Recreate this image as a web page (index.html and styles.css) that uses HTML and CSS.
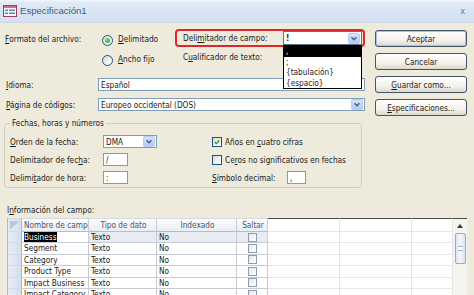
FILE: index.html
```html
<!DOCTYPE html>
<html lang="es">
<head>
    <meta charset="UTF-8">
    <title>Especificación1</title>
    <link rel="stylesheet" href="styles.css">
</head>
<body>
    <div class="window">
        <div class="titlebar">
            <svg class="app-icon" viewBox="0 0 14 12">
                <rect x="0.5" y="0.5" width="13" height="11" fill="#fdf7f9" stroke="#9a3f62"/>
                <rect x="1" y="1" width="12" height="2" fill="#cf6d8f"/>
                <rect x="2" y="4.5" width="3" height="1.5" fill="#5a86c4"/>
                <rect x="6" y="4.5" width="6" height="1.5" fill="#5a86c4"/>
                <rect x="2" y="7.5" width="3" height="1.5" fill="#5a86c4"/>
                <rect x="6" y="7.5" width="6" height="1.5" fill="#5a86c4"/>
            </svg>
            <span class="title">Especificación1</span>
            <span class="close">x</span>
        </div>

        <div class="dialog">
            <div class="top">
                <div class="main">
                    <div class="format-row">
                        <span class="format-label"><u>F</u>ormato del archivo:</span>
                        <div class="radios">
                            <div class="radio"><span class="radio-dot checked"></span><span><u>D</u>elimitado</span></div>
                            <div class="radio"><span class="radio-dot"></span><span><u>A</u>ncho fijo</span></div>
                        </div>
                        <div class="delims">
                            <div class="delim-field">
                                <span class="delim-label">Deli<u>m</u>itador de campo:</span>
                                <div class="combo combo-open">
                                    <span class="combo-text"><b>!</b></span>
                                    <span class="combo-arrow">
                                        <svg viewBox="0 0 9 9"><path d="M2 3.2 L4.5 5.7 L7 3.2" fill="none" stroke="#4d6185" stroke-width="1.6"/></svg>
                                    </span>
                                    <ul class="dropdown">
                                        <li class="selected">,</li>
                                        <li>;</li>
                                        <li>{tabulación}</li>
                                        <li>{espacio}</li>
                                    </ul>
                                </div>
                            </div>
                            <div class="qualifier">C<u>u</u>alificador de texto:</div>
                        </div>
                    </div>

                    <div class="field-row">
                        <span class="field-label"><u>I</u>dioma:</span>
                        <div class="input wide">Español</div>
                    </div>
                    <div class="field-row">
                        <span class="field-label"><u>P</u>ágina de códigos:</span>
                        <div class="combo wide">
                            <span class="combo-text">Europeo occidental (DOS)</span>
                            <span class="combo-arrow">
                                <svg viewBox="0 0 9 9"><path d="M2 3.2 L4.5 5.7 L7 3.2" fill="none" stroke="#4d6185" stroke-width="1.6"/></svg>
                            </span>
                        </div>
                    </div>

                    <fieldset class="group">
                        <legend>Fechas, horas y números</legend>
                        <div class="group-grid">
                            <span><u>O</u>rden de la fecha:</span>
                            <div class="combo date-order">
                                <span class="combo-text">DMA</span>
                                <span class="combo-arrow">
                                    <svg viewBox="0 0 9 9"><path d="M2 3.2 L4.5 5.7 L7 3.2" fill="none" stroke="#4d6185" stroke-width="1.6"/></svg>
                                </span>
                            </div>
                            <div class="check">
                                <span class="check-box">
                                    <svg viewBox="0 0 10 10"><path d="M2.2 5 L4.2 7 L7.8 2.8" fill="none" stroke="#21a121" stroke-width="1.6"/></svg>
                                </span>
                                <span>Años en <u>c</u>uatro cifras</span>
                            </div>

                            <span>Delimitador de fec<u>h</u>a:</span>
                            <div class="input small">/</div>
                            <div class="check">
                                <span class="check-box"></span>
                                <span>Ce<u>r</u>os no significativos en fechas</span>
                            </div>

                            <span>Delimi<u>t</u>ador de hora:</span>
                            <div class="input small">:</div>
                            <div class="decimal">
                                <span class="decimal-label"><u>S</u>ímbolo decimal:</span>
                                <div class="input tiny">,</div>
                            </div>
                        </div>
                    </fieldset>
                </div>

                <div class="buttons">
                    <div class="btn default">Aceptar</div>
                    <div class="btn">Cancelar</div>
                    <div class="btn"><span><u>G</u>uardar como...</span></div>
                    <div class="btn"><span><u>E</u>specificaciones...</span></div>
                </div>
            </div>

            <div class="info-label">I<u>n</u>formación del campo:</div>

            <div class="grid">
                <div class="sheet">
                    <div class="row head">
                        <div class="cell sel corner">
                            <svg viewBox="0 0 15 13"><path d="M2 2 H13 L2 12 Z" fill="#b7c8e4"/></svg>
                        </div>
                        <div class="cell">Nombre de campo</div>
                        <div class="cell">Tipo de dato</div>
                        <div class="cell">Indexado</div>
                        <div class="cell">Saltar</div>
                        <div class="cell blank"></div>
                        <div class="cell blank"></div>
                        <div class="cell blank"></div>
                    </div>
                    <div class="row current">
                        <div class="cell sel"></div>
                        <div class="cell name"><span class="hl">Business</span></div>
                        <div class="cell">Texto</div>
                        <div class="cell">No</div>
                        <div class="cell skip"><span class="skip-box"></span></div>
                        <div class="cell blank"></div>
                        <div class="cell blank"></div>
                        <div class="cell blank"></div>
                    </div>
                    <div class="row">
                        <div class="cell sel"></div>
                        <div class="cell">Segment</div>
                        <div class="cell">Texto</div>
                        <div class="cell">No</div>
                        <div class="cell skip"><span class="skip-box"></span></div>
                        <div class="cell blank"></div>
                        <div class="cell blank"></div>
                        <div class="cell blank"></div>
                    </div>
                    <div class="row">
                        <div class="cell sel"></div>
                        <div class="cell">Category</div>
                        <div class="cell">Texto</div>
                        <div class="cell">No</div>
                        <div class="cell skip"><span class="skip-box"></span></div>
                        <div class="cell blank"></div>
                        <div class="cell blank"></div>
                        <div class="cell blank"></div>
                    </div>
                    <div class="row">
                        <div class="cell sel"></div>
                        <div class="cell">Product Type</div>
                        <div class="cell">Texto</div>
                        <div class="cell">No</div>
                        <div class="cell skip"><span class="skip-box"></span></div>
                        <div class="cell blank"></div>
                        <div class="cell blank"></div>
                        <div class="cell blank"></div>
                    </div>
                    <div class="row">
                        <div class="cell sel"></div>
                        <div class="cell">Impact Business</div>
                        <div class="cell">Texto</div>
                        <div class="cell">No</div>
                        <div class="cell skip"><span class="skip-box"></span></div>
                        <div class="cell blank"></div>
                        <div class="cell blank"></div>
                        <div class="cell blank"></div>
                    </div>
                    <div class="row">
                        <div class="cell sel"></div>
                        <div class="cell">Impact Category</div>
                        <div class="cell">Texto</div>
                        <div class="cell">No</div>
                        <div class="cell skip"><span class="skip-box"></span></div>
                        <div class="cell blank"></div>
                        <div class="cell blank"></div>
                        <div class="cell blank"></div>
                    </div>
                </div>
                <div class="scrollbar">
                    <span class="sb-up"></span>
                    <span class="sb-thumb"><span class="sb-grip"></span></span>
                </div>
            </div>
        </div>
    </div>
</body>
</html>
```

FILE: styles.css
```css
:root {
    --clr-face: #eeebdd;
    --clr-text: #1a1a1a;
    --clr-field-border: #7f9db9;
    --clr-xp-blue: #1c5180;
    --clr-grid-line: #c6ccd6;
    --clr-blank-line: #e6e6e6;
}

* {
    margin: 0;
    padding: 0;
    box-sizing: border-box;
}

body {
    font-family: "DejaVu Sans Condensed", "DejaVu Sans", sans-serif;
    font-stretch: condensed;
    font-size: 8.2px;
    line-height: 10px;
    color: var(--clr-text);
    background: var(--clr-face);
    width: 474px;
    height: 295px;
    overflow: hidden;
}

u {
    text-decoration-thickness: 1px;
    text-underline-offset: 1px;
}

/* Title bar */
.titlebar {
    height: 23px;
    display: flex;
    align-items: center;
    padding: 0 9px 0 3px;
    background: linear-gradient(#f1f6fc 0, #dfe9f5 3px, #d3e0f1 100%);
    border-bottom: 1px solid #cfd8e2;
}

.app-icon {
    width: 14px;
    height: 12px;
    margin-right: 3px;
}

.title {
    flex: 1;
    font-family: "Liberation Sans", sans-serif;
    font-stretch: normal;
    font-size: 9.6px;
    color: #3f5a80;
}

.close {
    font-family: "Liberation Sans", sans-serif;
    font-size: 9px;
    color: #6a7789;
}

/* Dialog body */
.dialog {
    padding: 6px 0 0 4px;
}

.top {
    display: flex;
    align-items: flex-start;
}

.main {
    width: 362px;
}

.format-row {
    display: flex;
    height: 40px;
}

.format-label {
    width: 98px;
    height: 20px;
    display: flex;
    align-items: center;
    padding-left: 1px;
}

.radios {
    width: 73px;
    display: flex;
    flex-direction: column;
}

.radio {
    height: 20px;
    display: flex;
    align-items: center;
    gap: 5px;
}

.radio-dot {
    width: 11px;
    height: 11px;
    border-radius: 50%;
    border: 1px solid var(--clr-xp-blue);
    background: linear-gradient(135deg, #dcdcd4, #ffffff);
    display: flex;
    align-items: center;
    justify-content: center;
    margin-top: 2px;
}

.radio-dot.checked::after {
    content: "";
    width: 5px;
    height: 5px;
    border-radius: 50%;
    background: radial-gradient(circle at 35% 35%, #7ee07e, #21a121);
}

.delims {
    flex: 1;
}

.delim-field {
    width: 190px;
    height: 18px;
    border: 2px solid #e0262a;
    border-radius: 4px;
    display: flex;
    align-items: center;
    padding-left: 6px;
}

.delim-label {
    width: 100px;
}

.qualifier {
    height: 20px;
    display: flex;
    align-items: center;
    padding-left: 8px;
}

/* Inputs and combos */
.input,
.combo {
    height: 13px;
    border: 1px solid var(--clr-field-border);
    background: #fff;
    display: flex;
    align-items: center;
}

.input {
    padding-left: 2px;
}

.combo {
    position: relative;
}

.combo-text {
    flex: 1;
    padding-left: 2px;
    white-space: nowrap;
    overflow: hidden;
}

.combo-arrow {
    width: 12px;
    height: 11px;
    margin-right: 1px;
    border-radius: 2px;
    border: 1px solid #b8cbf3;
    background: linear-gradient(#d7e3fd, #b4c9f5);
    display: flex;
}

.combo-arrow svg {
    width: 10px;
    height: 9px;
}

.delim-field .combo {
    width: 79px;
    height: 14px;
    border-color: #5f6f86;
}

.dropdown {
    position: absolute;
    top: 13px;
    left: -1px;
    width: 79px;
    list-style: none;
    background: #fff;
    border: 1px solid #000;
    z-index: 2;
}

.dropdown li {
    height: 10.5px;
    line-height: 10.5px;
    padding-left: 2px;
}

.dropdown li.selected {
    background: #000;
    color: #fff;
}

.field-row {
    display: flex;
    align-items: center;
    margin-top: 9px;
}

.field-row + .field-row {
    margin-top: 7px;
}

.field-label {
    width: 94px;
    padding-left: 2px;
}

.wide {
    width: 267px;
}

/* Dates group */
.group {
    margin-top: 7px;
    width: 358px;
    border: 1px solid #d0d0bf;
    border-radius: 3px;
    padding: 7px 0 3px 5px;
}

.group legend {
    padding: 0 2px;
    line-height: 10px;
}

.group-grid {
    display: grid;
    grid-template-columns: 93px 108px 1fr;
    grid-auto-rows: 13px;
    row-gap: 5px;
    align-items: center;
}

.date-order {
    width: 54px;
}

.small {
    width: 25px;
}

.tiny {
    width: 19px;
}

.check {
    display: flex;
    align-items: center;
    gap: 3px;
    padding-left: 1px;
}

.check-box {
    width: 10px;
    height: 10px;
    border: 1px solid var(--clr-xp-blue);
    background: linear-gradient(135deg, #dcdcd4, #ffffff);
    display: flex;
}

.check-box svg {
    width: 8px;
    height: 8px;
}

.decimal {
    display: flex;
    align-items: center;
    padding-left: 1px;
}

.decimal-label {
    width: 75px;
}

/* Buttons */
.buttons {
    width: 92px;
    margin: 1px 0 0 9px;
    display: flex;
    flex-direction: column;
    gap: 6px;
}

.btn {
    height: 17px;
    border: 1px solid #44546b;
    border-radius: 3px;
    background: linear-gradient(#ffffff, #f3f2ec 60%, #dcd9ce);
    display: flex;
    align-items: center;
    justify-content: center;
}

.btn.default {
    box-shadow: inset 0 0 0 1px #a9c1ea;
}

/* Field grid */
.info-label {
    margin: 17px 0 0 3px;
}

.grid {
    margin: 3px 0 0 3px;
    width: 460px;
    height: 80px;
    display: flex;
}

.sheet {
    flex: 1;
    border-left: 1px solid #b2b9c4;
}

.row {
    display: grid;
    grid-template-columns: 14px 67px 68px 80px 31px 72px 72px 1fr;
    height: 11.4px;
}

.row.head {
    height: 14px;
}

.cell {
    border-right: 1px solid var(--clr-grid-line);
    border-bottom: 1px solid var(--clr-grid-line);
    padding-left: 2px;
    line-height: 10px;
    white-space: nowrap;
    overflow: hidden;
    background: #fff;
}

.head .cell {
    text-align: center;
    color: #47566b;
    line-height: 12px;
    border-top: 1px solid #d4d9e1;
    border-bottom-color: #b5bdc9;
    background: linear-gradient(#fbfcfd, #eaedf3);
}

.head .cell:nth-child(2) {
    text-align: left;
}

.head .cell.blank {
    background: #fff;
    border-top: 1px solid #4a4a4a;
    border-bottom-color: var(--clr-blank-line);
}

.cell.sel {
    padding: 0;
    background: linear-gradient(90deg, #e6ecf6, #d5dfee);
    border-right-color: #a9b7cb;
    border-bottom-color: #d3dbe7;
}

.head .cell.corner {
    background: linear-gradient(90deg, #e6ecf6, #d5dfee);
    display: flex;
}

.corner svg {
    width: 14px;
    height: 12px;
}

.cell.blank {
    border-right-color: var(--clr-blank-line);
    border-bottom-color: var(--clr-blank-line);
}

.row.current .cell:not(.sel):not(.blank):not(.name) {
    background: #e8ebf2;
}

.hl {
    background: #000;
    color: #fff;
}

.cell.skip {
    display: flex;
    justify-content: center;
    align-items: center;
    padding: 0;
}

.skip-box {
    width: 9px;
    height: 9px;
    border: 1px solid #8e9cb0;
    background: linear-gradient(135deg, #e4e7ec, #ffffff);
}

.scrollbar {
    width: 14px;
    border-top: 1px solid #4a4a4a;
    background: #f4f4f0;
    display: flex;
    flex-direction: column;
    align-items: center;
    padding-top: 5px;
}

.sb-up {
    width: 0;
    height: 0;
    border-left: 3px solid transparent;
    border-right: 3px solid transparent;
    border-bottom: 4px solid #3a3a3a;
}

.sb-thumb {
    margin-top: 5px;
    width: 11px;
    height: 31px;
    border: 1px solid #98aac6;
    border-radius: 2px;
    background: linear-gradient(90deg, #dbe4f2, #f3f6fb, #d8e1ef);
    display: flex;
    align-items: center;
    justify-content: center;
}

.sb-grip {
    width: 5px;
    height: 5px;
    border-top: 1px solid #a7b6cc;
    border-bottom: 1px solid #a7b6cc;
    box-shadow: inset 0 1px 0 #fff, inset 0 -1px 0 #fff;
}
```
